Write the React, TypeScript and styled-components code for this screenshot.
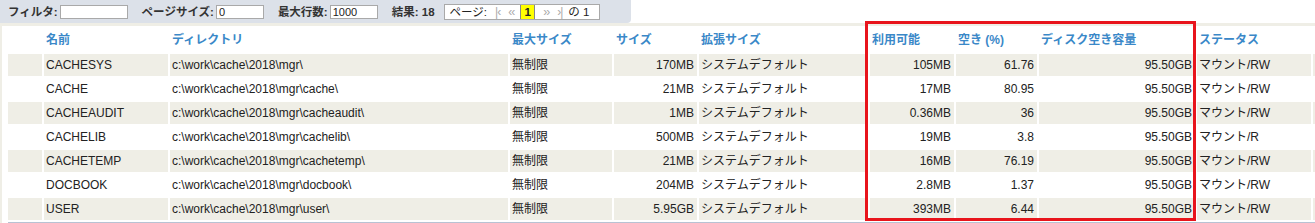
import styled, { createGlobalStyle } from 'styled-components';

const GlobalStyle = createGlobalStyle`
  body {
    margin: 0;
    overflow: hidden;
    background: #fff;
    font-family: 'Liberation Sans', 'Noto Sans CJK JP', Arial, sans-serif;
    font-size: 12px;
    color: #222;
  }
`;

type Row = {
  name: string;
  dir: string;
  max: string;
  size: string;
  ext: string;
  avail: string;
  free: string;
  disk: string;
  status: string;
};

const rows: Row[] = [
  { name: 'CACHESYS', dir: 'c:\\work\\cache\\2018\\mgr\\', max: '無制限', size: '170MB', ext: 'システムデフォルト', avail: '105MB', free: '61.76', disk: '95.50GB', status: 'マウント/RW' },
  { name: 'CACHE', dir: 'c:\\work\\cache\\2018\\mgr\\cache\\', max: '無制限', size: '21MB', ext: 'システムデフォルト', avail: '17MB', free: '80.95', disk: '95.50GB', status: 'マウント/RW' },
  { name: 'CACHEAUDIT', dir: 'c:\\work\\cache\\2018\\mgr\\cacheaudit\\', max: '無制限', size: '1MB', ext: 'システムデフォルト', avail: '0.36MB', free: '36', disk: '95.50GB', status: 'マウント/RW' },
  { name: 'CACHELIB', dir: 'c:\\work\\cache\\2018\\mgr\\cachelib\\', max: '無制限', size: '500MB', ext: 'システムデフォルト', avail: '19MB', free: '3.8', disk: '95.50GB', status: 'マウント/R' },
  { name: 'CACHETEMP', dir: 'c:\\work\\cache\\2018\\mgr\\cachetemp\\', max: '無制限', size: '21MB', ext: 'システムデフォルト', avail: '16MB', free: '76.19', disk: '95.50GB', status: 'マウント/RW' },
  { name: 'DOCBOOK', dir: 'c:\\work\\cache\\2018\\mgr\\docbook\\', max: '無制限', size: '204MB', ext: 'システムデフォルト', avail: '2.8MB', free: '1.37', disk: '95.50GB', status: 'マウント/RW' },
  { name: 'USER', dir: 'c:\\work\\cache\\2018\\mgr\\user\\', max: '無制限', size: '5.95GB', ext: 'システムデフォルト', avail: '393MB', free: '6.44', disk: '95.50GB', status: 'マウント/RW' },
];

const colWidths = [34, 124, 338, 102, 83, 169, 84, 81, 156, 114, 40];

export default function App() {
  return (
    <Page>
      <GlobalStyle />
      <Toolbar>
        <Label>フィルタ:</Label>
        <Field width={68} defaultValue="" />
        <Label>ページサイズ:</Label>
        <Field width={48} defaultValue="0" />
        <Label>最大行数:</Label>
        <Field width={48} defaultValue="1000" />
        <Label>結果: 18</Label>
        <Pager>
          <span>ページ:</span>
          <PagerLink>|‹</PagerLink>
          <PagerLink>‹‹</PagerLink>
          <CurrentPage>1</CurrentPage>
          <PagerLink>››</PagerLink>
          <PagerLink>›|</PagerLink>
          <PagerTotal>の 1</PagerTotal>
        </Pager>
      </Toolbar>
      <TableArea>
        <Grid>
          <colgroup>
            {colWidths.map((w, i) => (
              <col key={i} style={{ width: w }} />
            ))}
          </colgroup>
          <thead>
            <tr>
              <Th />
              <Th>名前</Th>
              <Th>ディレクトリ</Th>
              <Th>最大サイズ</Th>
              <Th>サイズ</Th>
              <Th>拡張サイズ</Th>
              <Th>利用可能</Th>
              <Th>空き (%)</Th>
              <Th>ディスク空き容量</Th>
              <Th>ステータス</Th>
              <Th />
            </tr>
          </thead>
          <tbody>
            {rows.map((r, i) => (
              <BodyRow key={r.name} $odd={i % 2 === 0}>
                <Td />
                <Td>{r.name}</Td>
                <Td>{r.dir}</Td>
                <Td>{r.max}</Td>
                <Td $num>{r.size}</Td>
                <Td>{r.ext}</Td>
                <Td $num>{r.avail}</Td>
                <Td $num>{r.free}</Td>
                <Td $num>{r.disk}</Td>
                <Td>{r.status}</Td>
                <Td />
              </BodyRow>
            ))}
          </tbody>
        </Grid>
        <ScrollEdge />
      </TableArea>
      <Highlight />
    </Page>
  );
}

const Page = styled.div`
  position: relative;
  width: 1315px;
  height: 223px;
  overflow: hidden;
`;

const Toolbar = styled.div`
  display: flex;
  align-items: center;
  width: 631px;
  height: 23px;
  box-sizing: border-box;
  padding-left: 8px;
  background: #dce1e9;
  border-bottom-right-radius: 4px;
  line-height: 14px;
`;

const Label = styled.span`
  font-size: 11.5px;
  font-weight: bold;
  color: #333;
  margin-left: 14px;
  margin-right: 2px;
  white-space: nowrap;
  &:first-child {
    margin-left: 0;
  }
`;

const Field = styled.input<{ width: number }>`
  width: ${(p) => p.width}px;
  height: 14px;
  box-sizing: border-box;
  margin: 1px 0 0;
  padding: 0 2px;
  border: 1px solid #a9a9a9;
  font: 11px 'Liberation Sans', Arial, sans-serif;
  color: #222;
  background: #fff;
`;

const Pager = styled.div`
  display: flex;
  align-items: center;
  margin-left: 7px;
  width: 156px;
  height: 16px;
  box-sizing: border-box;
  padding-left: 5px;
  border: 1px solid #a9a9a9;
  background: #fff;
  color: #222;
  font-size: 11.5px;
  white-space: nowrap;
`;

const PagerLink = styled.span`
  color: #aaa;
  font-size: 12px;
  margin-left: 8px;
  letter-spacing: -1px;
`;

const CurrentPage = styled.span`
  display: inline-block;
  width: 15px;
  height: 14px;
  line-height: 14px;
  margin-left: 6px;
  box-sizing: border-box;
  text-align: center;
  font-weight: bold;
  background: #ffff00;
  border-left: 1px solid #888;
  border-right: 1px solid #888;
`;

const PagerTotal = styled.span`
  margin-left: 6px;
`;

const TableArea = styled.div`
  border-top: 3px solid #efeee6;
  border-left: 2px solid #efeee6;
  padding-left: 4px;
`;

const Grid = styled.table`
  table-layout: fixed;
  border-collapse: separate;
  border-spacing: 2px;
  width: 1349px;
`;

const Th = styled.th`
  height: 24px;
  padding: 0 2px;
  line-height: 16px;
  text-align: left;
  vertical-align: middle;
  font-size: 12px;
  font-weight: bold;
  color: #3a88c8;
  white-space: nowrap;
`;

const BodyRow = styled.tr<{ $odd: boolean }>`
  background: ${(p) => (p.$odd ? '#efeee6' : '#fff')};
`;

const Td = styled.td<{ $num?: boolean }>`
  height: 22px;
  padding: 0 3px 0 2px;
  line-height: 16px;
  text-align: ${(p) => (p.$num ? 'right' : 'left')};
  vertical-align: middle;
  white-space: nowrap;
  overflow: hidden;
  color: #222;
`;

const ScrollEdge = styled.div`
  margin-left: 2px;
  height: 3px;
  background: #b8c2d3;
`;

const Highlight = styled.div`
  position: absolute;
  left: 865px;
  top: 21px;
  width: 331px;
  height: 200px;
  box-sizing: border-box;
  border: 3px solid #e8141c;
  pointer-events: none;
`;
